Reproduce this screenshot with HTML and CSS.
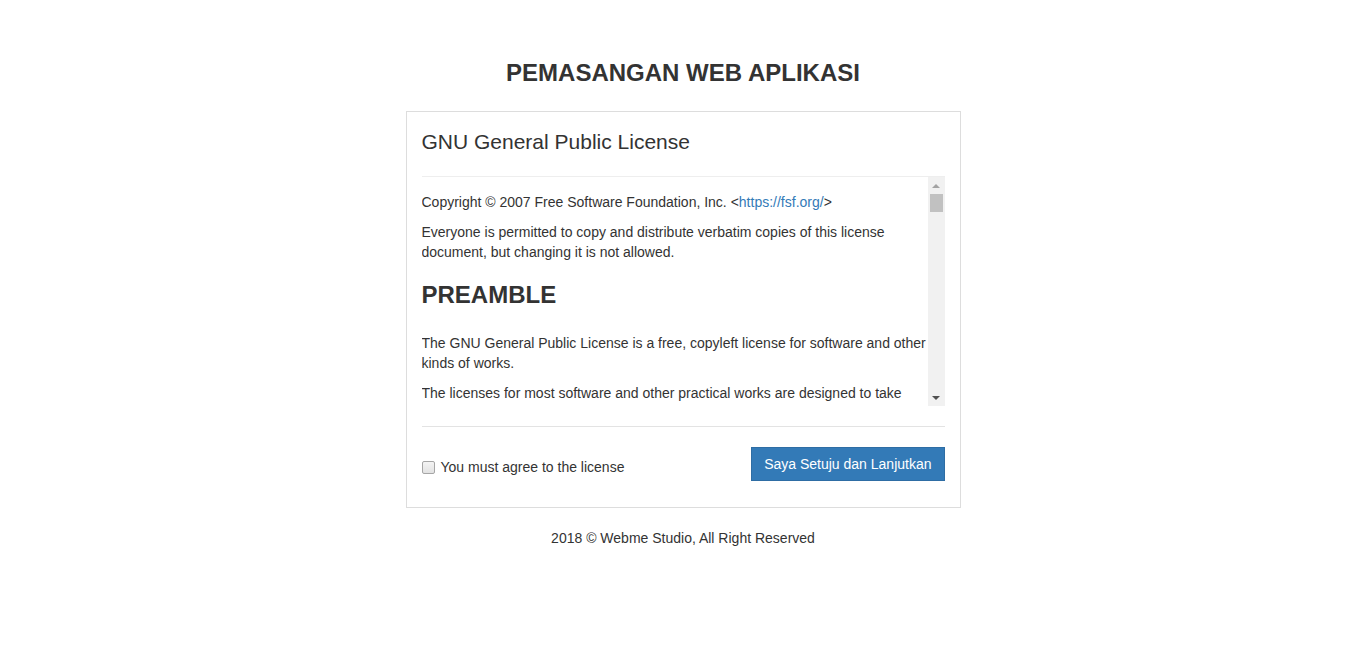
FILE: index.html
```html
<!DOCTYPE html>
<html lang="id">
<head>
<meta charset="utf-8">
<title>Pemasangan Web Aplikasi</title>
<link rel="stylesheet" href="styles.css">
</head>
<body>
<h1 class="page-title">PEMASANGAN WEB APLIKASI</h1>
<div class="panel">
  <h4 class="panel-title">GNU General Public License</h4>
  <hr class="sep">
  <div class="license">
    <div class="license-text">
      <p>Copyright © 2007 Free Software Foundation, Inc. &lt;<a href="#">https://fsf.org/</a>&gt;</p>
      <p>Everyone is permitted to copy and distribute verbatim copies of this license document, but changing it is not allowed.</p>
      <h3 class="section">PREAMBLE</h3>
      <p>The GNU General Public License is a free, copyleft license for software and other kinds of works.</p>
      <p>The licenses for most software and other practical works are designed to take away your freedom to share and change the works.</p>
    </div>
    <div class="scrollbar">
      <div class="sb-btn"><span class="tri-up"></span></div>
      <div class="sb-thumb"></div>
      <div class="sb-space"></div>
      <div class="sb-btn"><span class="tri-down"></span></div>
    </div>
  </div>
  <hr class="sep sep-bottom">
  <div class="actions">
    <label class="agree"><input type="checkbox" class="check"> You must agree to the license</label>
    <button class="btn">Saya Setuju dan Lanjutkan</button>
  </div>
</div>
<p class="footer">2018 © Webme Studio, All Right Reserved</p>
</body>
</html>
```
FILE: styles.css
```css
html, body {
  margin: 0;
  padding: 0;
  background: #fff;
}
body {
  font-family: "Liberation Sans", Arial, Helvetica, sans-serif;
  font-size: 14px;
  line-height: 20px;
  color: #333;
}
.page-title {
  margin: 60px 0 25px;
  font-size: 24px;
  line-height: 26px;
  font-weight: bold;
  text-align: center;
  color: #333;
}
.panel {
  width: 555px;
  box-sizing: border-box;
  margin: 0 auto;
  border: 1px solid #ddd;
  padding: 15px 15px 26px;
}
.panel-title {
  margin: 4px 0 23px;
  font-size: 21px;
  line-height: 22px;
  font-weight: normal;
}
.sep {
  border: 0;
  border-top: 1px solid #eee;
  margin: 0;
  height: 0;
}
.sep-bottom {
  margin-top: 20px;
  border-top-color: #e3e3e3;
}
.license {
  display: flex;
  height: 229px;
}
.license-text {
  flex: 1;
  overflow: hidden;
  padding-top: 15px;
}
.license-text p {
  margin: 0 0 10px;
}
.license-text a {
  color: #337ab7;
  text-decoration: none;
}
.section {
  margin: 20px 0 25px;
  font-size: 24px;
  line-height: 26px;
  font-weight: bold;
}
.scrollbar {
  width: 17px;
  background: #f1f1f1;
  display: flex;
  flex-direction: column;
}
.sb-btn {
  height: 17px;
  display: flex;
  align-items: center;
  justify-content: center;
}
.tri-up {
  width: 0;
  height: 0;
  border-left: 4px solid transparent;
  border-right: 4px solid transparent;
  border-bottom: 4px solid #a3a3a3;
}
.tri-down {
  width: 0;
  height: 0;
  border-left: 4px solid transparent;
  border-right: 4px solid transparent;
  border-top: 4px solid #505050;
}
.sb-thumb {
  height: 18px;
  margin: 0 2px;
  background: #c1c1c1;
}
.sb-space {
  flex: 1;
}
.actions {
  margin-top: 20px;
  display: flex;
  justify-content: space-between;
  align-items: flex-start;
}
.agree {
  margin-top: 10px;
  display: flex;
  align-items: center;
  gap: 6px;
  cursor: pointer;
}
.check {
  appearance: none;
  -webkit-appearance: none;
  width: 13px;
  height: 13px;
  margin: 0;
  border: 1px solid #a6a6a6;
  border-radius: 2px;
  background: linear-gradient(#f4f4f4, #e2e2e2);
  box-sizing: border-box;
}
.btn {
  font-family: inherit;
  font-size: 14px;
  line-height: 20px;
  padding: 6px 12px;
  border: 1px solid #2e6da4;
  background: #337ab7;
  color: #fff;
  border-radius: 0;
  cursor: pointer;
}
.footer {
  margin: 20px 0 0;
  text-align: center;
}
```
